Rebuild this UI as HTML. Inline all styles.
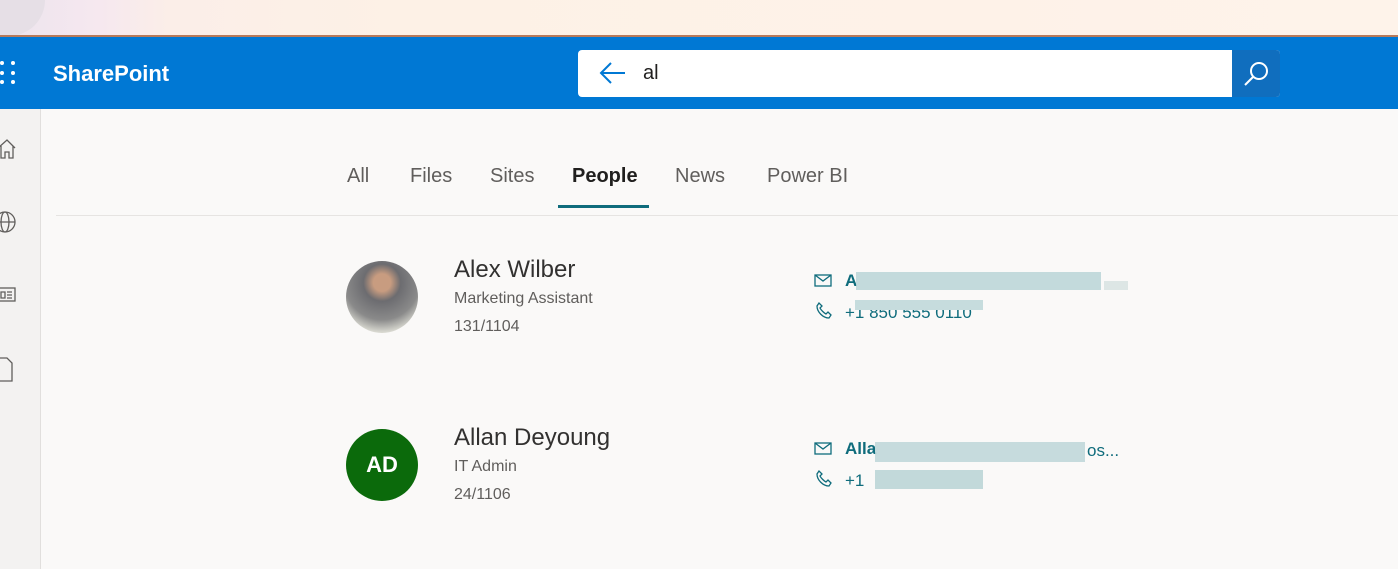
<!DOCTYPE html>
<html><head><style>
body{margin:0;width:1398px;height:569px;overflow:hidden;background:#faf9f8;font-family:"Liberation Sans",sans-serif;position:relative}
.a{position:absolute}
.tab{position:absolute;top:165px;font-size:20px;color:#605e5c}
.blk{position:absolute;height:9px}
</style></head><body>
<div class="a" style="left:0;top:0;width:1398px;height:36px;background:linear-gradient(90deg,#ece4ee 0,#f6e8ef 100px,#fbeee8 170px,#fdf1e6 400px,#fef3ea 100%)"></div>
<div class="a" style="left:0;top:0;width:45px;height:36px;background:#e6dfe6;border-radius:0 0 40px 0"></div>
<div class="a" style="left:0;top:35px;width:1398px;height:2px;background:#b87a5a"></div>
<div class="a" style="left:0;top:37px;width:1398px;height:72px;background:#0078d4"></div>
<svg class="a" style="left:0;top:60px" width="20" width="20" height="26"><g fill="#fff"><circle cx="2" cy="3" r="2"/><circle cx="13" cy="3" r="2"/><circle cx="2" cy="13" r="2"/><circle cx="13" cy="13" r="2"/><circle cx="2" cy="22" r="2"/><circle cx="13" cy="22" r="2"/></g></svg>
<div class="a" style="left:53px;top:61px;color:#fff;font-size:22px;font-weight:bold">SharePoint</div>
<div class="a" style="left:578px;top:50px;width:702px;height:47px;background:#fff;border-radius:4px;overflow:hidden">
<svg class="a" style="left:20px;top:11px" width="30" height="24"><path d="M27 12H3M13 2L3 12l10 10" stroke="#0078d4" stroke-width="2" fill="none"/></svg>
<div class="a" style="left:65px;top:12px;font-size:20px;color:#201f1e">al</div>
<div class="a" style="left:654px;top:0;width:48px;height:47px;background:#106ebe">
<svg class="a" style="left:11px;top:10px" width="28" height="28"><circle cx="16" cy="11" r="8" stroke="#fff" stroke-width="2" fill="none"/><path d="M10 17L2 25" stroke="#fff" stroke-width="2"/></svg></div></div>
<div class="a" style="left:0;top:109px;width:40px;height:460px;background:#f3f2f1;border-right:1px solid #e1dfdd"></div>
<svg class="a" style="left:0;top:138px" width="20" height="250" fill="none" stroke="#605e5c" stroke-width="1.3">
<path d="M-2 10L7 2l8 8M1 8v12h4v-6h4v6h4V8"/>
<circle cx="5" cy="84" r="10"/><ellipse cx="5" cy="84" rx="4" ry="10"/><path d="M-5 84h20"/>
<rect x="-2" y="150" width="17" height="13"/><path d="M1 154h4v6H1zM7 154h5M7 157h5M7 160h5"/>
<path d="M-3 220h10l5 5v18H-3z"/>
</svg>
<div class="tab" style="left:347px">All</div>
<div class="tab" style="left:410px">Files</div>
<div class="tab" style="left:490px">Sites</div>
<div class="tab" style="left:572px;color:#201f1e;font-weight:bold">People</div>
<div class="tab" style="left:675px">News</div>
<div class="tab" style="left:767px">Power BI</div>
<div class="a" style="left:558px;top:205px;width:91px;height:3px;background:#0f6c7c"></div>
<div class="a" style="left:56px;top:215px;width:1342px;height:1px;background:#e6e4e2"></div>
<div class="a" style="left:346px;top:261px;width:72px;height:72px;border-radius:50%;background:radial-gradient(circle at 50% 30%,#c89c80 0 14%,#6c6c70 30%,#8a8a8a 60%,#d8d8d0 80%)"></div>
<div class="a" style="left:454px;top:256px;font-size:24px;color:#323130">Alex Wilber</div>
<div class="a" style="left:454px;top:290px;font-size:16px;color:#605e5c">Marketing Assistant</div>
<div class="a" style="left:454px;top:318px;font-size:16px;color:#605e5c">131/1104</div>
<div class="a" style="left:346px;top:429px;width:72px;height:72px;border-radius:50%;background:#0b6a0b;color:#fff;font-size:22px;font-weight:bold;text-align:center;line-height:72px">AD</div>
<div class="a" style="left:454px;top:424px;font-size:24px;color:#323130">Allan Deyoung</div>
<div class="a" style="left:454px;top:458px;font-size:16px;color:#605e5c">IT Admin</div>
<div class="a" style="left:454px;top:486px;font-size:16px;color:#605e5c">24/1106</div>
<svg class="a" style="left:814px;top:272px" width="20" height="220" fill="none" stroke="#0f6c7c" stroke-width="1.3">
<rect x="1" y="3" width="16" height="11"/><path d="M1 3l8 6 8-6"/>
<path d="M3 34c0 6 6 12 12 12l2-3-3-3-2 2c-2-1-5-4-6-6l2-2-3-3z"/>
<rect x="1" y="171" width="16" height="11"/><path d="M1 171l8 6 8-6"/>
<path d="M3 202c0 6 6 12 12 12l2-3-3-3-2 2c-2-1-5-4-6-6l2-2-3-3z"/>
</svg>
<div class="a" style="left:845px;top:271px;font-size:17px;color:#0f6c7c;font-weight:bold">A</div>
<div class="a" style="left:856px;top:272px;width:245px;height:18px;background:#b5d2d4;opacity:.8"></div>
<div class="a" style="left:1104px;top:281px;width:24px;height:9px;background:#dde6e5"></div>
<div class="a" style="left:845px;top:303px;font-size:17px;color:#0f6c7c">+1 850 555 0110</div>
<div class="a" style="left:855px;top:300px;width:128px;height:10px;background:#c6dcdd"></div>
<div class="a" style="left:845px;top:439px;font-size:17px;color:#0f6c7c;font-weight:bold">Alla</div>
<div class="a" style="left:875px;top:442px;width:210px;height:20px;background:#bcd6d8;opacity:.85"></div>
<div class="a" style="left:1087px;top:441px;font-size:17px;color:#0f6c7c">os...</div>
<div class="a" style="left:845px;top:471px;font-size:17px;color:#0f6c7c">+1</div>
<div class="a" style="left:875px;top:470px;width:108px;height:19px;background:#c2d9da"></div>
</body></html>
